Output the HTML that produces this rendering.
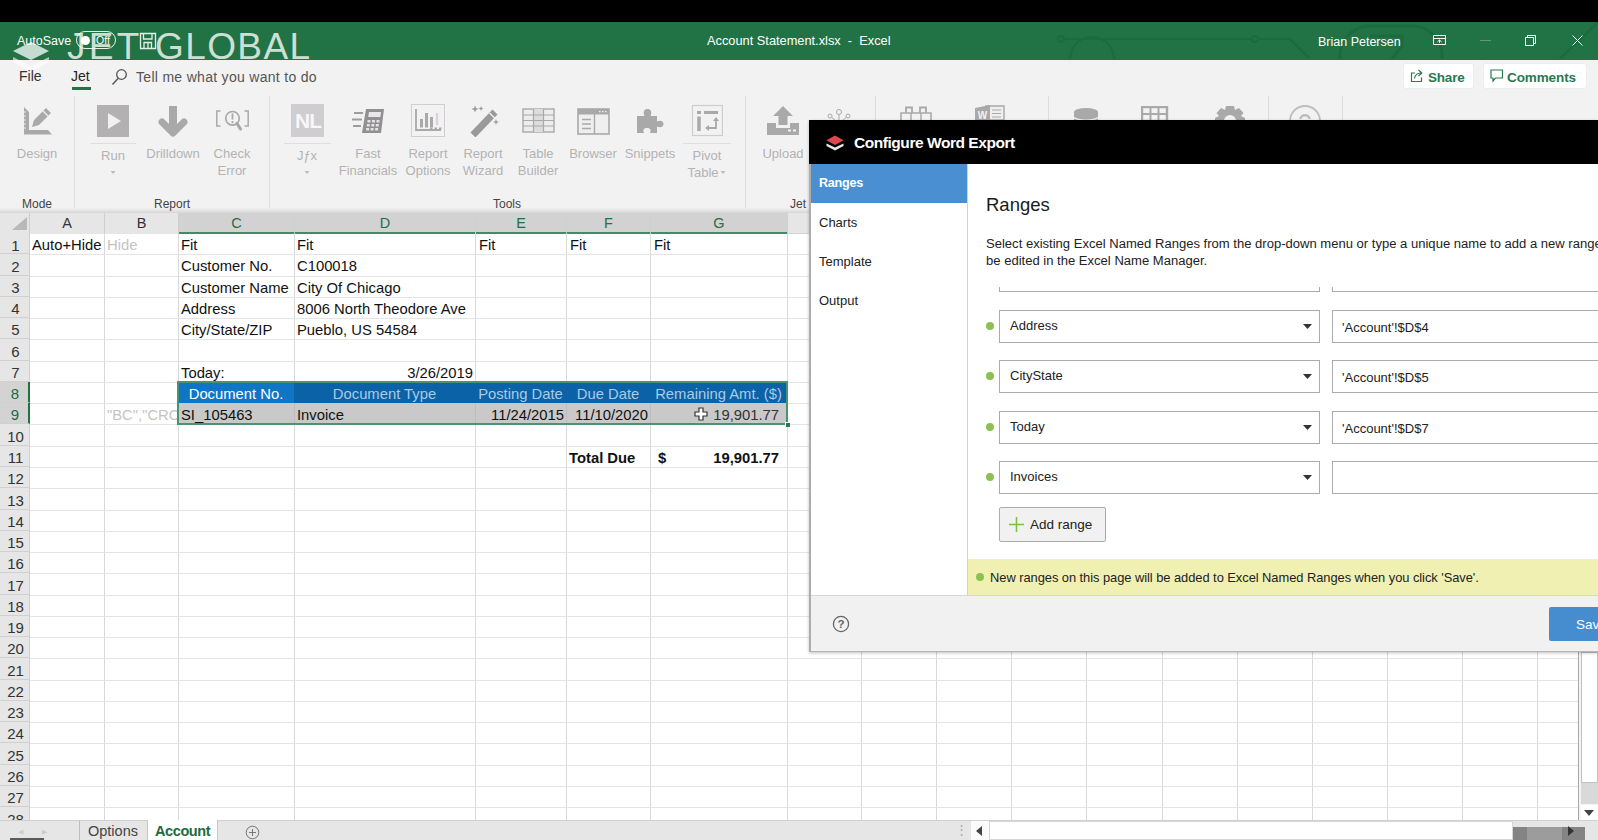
<!DOCTYPE html><html><head><meta charset="utf-8"><title>Account Statement.xlsx - Excel</title><style>
*{box-sizing:border-box;margin:0;padding:0}
html,body{width:1598px;height:840px;overflow:hidden;background:#fff}
body{position:relative;font-family:"Liberation Sans",sans-serif;font-size:13px;color:#222}
.a{position:absolute}
.t{position:absolute;white-space:nowrap;line-height:1}
#top{left:0;top:0;width:1598px;height:22px;background:#000}
#title{left:0;top:22px;width:1598px;height:38px;background:#217346;color:#fff}
#tabs{left:0;top:60px;width:1598px;height:35px;background:#f2f2f2}
#rib{left:0;top:95px;width:1598px;height:117px;background:#f2f2f2}
.rl{color:#b3b3b3;font-size:13px;margin-top:1px;text-align:center;transform:translateX(-50%)}
.gl{color:#444;font-size:12px;transform:translateX(-50%)}
.sep{width:1px;background:#dcdcdc;top:96px;height:112px}
.ch{top:213px;height:21px;background:#e6e6e6;color:#333;font-size:14.5px;text-align:center;line-height:20px;border-right:1px solid #cfcfcf}
.ch.s{background:#d2d2d2;color:#2a6b49;border-bottom:2px solid #3f8c66}
.rh{left:0;width:30px;background:#e6e6e6;color:#333;font-size:15px;text-align:center;border-bottom:1px solid #d0d0d0}
.c{position:absolute;white-space:nowrap;font-size:14.8px;color:#111;line-height:21px;height:21px}
.vl{position:absolute;width:1px;background:#d9d9d9;top:233px;height:587px}
.hl{position:absolute;height:1px;background:#e4e4e4;left:29px;width:1551px}
</style></head><body>
<div class="a" id="top"></div>
<div class="a" id="title"></div>
<div class="a" id="tabs"></div>
<div class="a" id="rib"></div>
<svg class="a" style="left:1040px;top:22px" width="558" height="37" viewBox="0 0 558 37"><g fill="none" stroke="#1c6a3f" stroke-width="2.200"><path d="M24 17H212"/><circle cx="21" cy="17" r="3"/><circle cx="215" cy="17" r="3"/><path d="M218 17H250L270 37"/><path d="M30 37A22 22 0 0 1 74 37"/><path d="M300 37A30 30 0 0 1 330 4H372A30 30 0 0 1 402 37" stroke-width="3"/><path d="M520 37L558 0"/><path d="M330 14H362V24L352 37" stroke-width="3"/></g></svg>
<div class="t" style="left:17px;top:35px;font-size:12.5px;color:#fff">AutoSave</div>
<div class="a" style="left:76px;top:31px;width:40px;height:18px;border:1px solid #e8f1ec;border-radius:9px"></div>
<div class="a" style="left:81px;top:36px;width:9px;height:9px;border-radius:50%;background:#fff"></div>
<div class="t" style="left:96px;top:35px;font-size:10.5px;color:#fff">Off</div>
<svg class="a" style="left:139px;top:32px" width="18" height="18" viewBox="0 0 18 18"><path d="M1.5 1.5H16.500V16.500H1.5Z M4.500 1.5V7H13V1.5 M5 16.500V10.500H12.500V16.500 M9 10.500V16.500" fill="none" stroke="#e6efe9" stroke-width="1.300"/></svg>
<div class="t" style="left:707px;top:35px;font-size:12.8px;color:#fff">Account Statement.xlsx &nbsp;-&nbsp; Excel</div>
<div class="t" style="left:1318px;top:36px;font-size:12.5px;color:#fff">Brian Petersen</div>
<svg class="a" style="left:1433px;top:35px" width="14" height="11"><path d="M.5.5H12.500V9.500H.5ZM.5 3.500H12.500M6.500 5V8M4.500 6.800L6.500 5L8.500 6.800" fill="none" stroke="#fff" stroke-width="1"/></svg>
<div class="a" style="left:1480px;top:40px;width:11px;height:1px;background:#5e9b7b"></div>
<svg class="a" style="left:1525px;top:35px" width="11" height="11"><path d="M.5 2.500H8.500V10.500H.5ZM2.500 2.500V.5H10.500V8.500H8.500" fill="none" stroke="#fff" stroke-width="1"/></svg>
<svg class="a" style="left:1572px;top:35px" width="11" height="11"><path d="M.5.5L10.500 10.500M10.500.5L.5 10.500" stroke="#fff" stroke-width="1"/></svg>
<div class="t" style="left:67px;top:28px;font-size:37px;color:rgba(255,255,255,.78);letter-spacing:3.300px">JET</div>
<div class="t" style="left:155px;top:28px;font-size:37px;color:rgba(255,255,255,.78);letter-spacing:1.400px">GLOBAL</div>
<svg class="a" style="left:11px;top:42px" width="40" height="36" viewBox="0 0 40 36"><path d="M2 9L20 0L38 9L20 18Z" fill="rgba(255,255,255,.75)"/><path d="M2 15L20 24L38 15V20L20 30L2 20Z" fill="rgba(255,255,255,.60)"/></svg>
<div class="t" style="left:19px;top:69px;font-size:14px;color:#333">File</div>
<div class="t" style="left:71px;top:69px;font-size:14px;color:#222">Jet</div>
<div class="a" style="left:72px;top:87px;width:19px;height:3px;background:#217346"></div>
<svg class="a" style="left:111px;top:68px" width="18" height="18" viewBox="0 0 18 18"><circle cx="10.500" cy="6.500" r="4.800" fill="none" stroke="#555" stroke-width="1.300"/><path d="M7 10.500L1.500 16.500" stroke="#555" stroke-width="1.400"/></svg>
<div class="t" style="left:136px;top:70px;font-size:14px;letter-spacing:.3px;color:#555">Tell me what you want to do</div>
<div class="a" style="left:1403px;top:63px;width:71px;height:26px;background:#fff;border:1px solid #ededed;border-radius:3px"></div>
<svg class="a" style="left:1410px;top:69px" width="15" height="14" viewBox="0 0 15 14"><path d="M5 4H1.500V12.500H11.500V8.500" fill="none" stroke="#2a7850" stroke-width="1.200"/><path d="M4.500 9.500C5 6 7.500 4 11 4M8.500 1L11.800 4L8.500 7" fill="none" stroke="#2a7850" stroke-width="1.200"/></svg>
<div class="t" style="left:1428px;top:71px;font-size:13.5px;color:#2a7850;font-weight:bold;letter-spacing:-.2px">Share</div>
<div class="a" style="left:1483px;top:63px;width:104px;height:26px;background:#fff;border:1px solid #ededed;border-radius:3px"></div>
<svg class="a" style="left:1490px;top:69px" width="14" height="14" viewBox="0 0 14 14"><path d="M1 1H12.500V9H5.500L3 12V9H1Z" fill="none" stroke="#2a7850" stroke-width="1.200"/></svg>
<div class="t" style="left:1507px;top:71px;font-size:13.5px;color:#2a7850;font-weight:bold;letter-spacing:-.1px">Comments</div>
<div class="a sep" style="left:74px"></div>
<div class="a sep" style="left:269px"></div>
<div class="a sep" style="left:745px"></div>
<div class="a sep" style="left:875px"></div>
<div class="a sep" style="left:1048px"></div>
<div class="a sep" style="left:1268px"></div>
<div class="a sep" style="left:1342px"></div>
<div class="a" style="left:0;top:208px;width:1598px;height:4px;background:linear-gradient(#f0f0f0,#dcdcdc)"></div>
<svg class="a" style="left:22px;top:105px" width="32" height="32" viewBox="0 0 32 32"><path d="M2 2L7 7V25H26L30 29.500H2Z" fill="#a9a9a9"/><path d="M2 7h2M2 11h2M2 15h2M2 19h2M2 23h2" stroke="#f2f2f2" stroke-width="1"/><path d="M10 22L12 15L24 3L29 8L17 20Z" fill="#a9a9a9"/><path d="M21 6L26 11" stroke="#f2f2f2" stroke-width="1.200"/></svg>
<div class="t rl" style="left:37px;top:146px">Design</div>
<svg class="a" style="left:97px;top:105px" width="32" height="32" viewBox="0 0 32 32"><rect x="0" y="0" width="32" height="32" fill="#b3b1b2"/><path d="M11 8L24 16L11 24Z" fill="#f3f0f3"/></svg>
<div class="a" style="left:90px;top:143px;width:46px;height:1px;background:#dedede"></div>
<div class="t rl" style="left:113px;top:148px">Run</div>
<svg class="a" style="left:110px;top:171px" width="6" height="4"><path d="M.5 0H5.500L3 3Z" fill="#bcbcbc"/></svg>
<svg class="a" style="left:157px;top:105px" width="32" height="33" viewBox="0 0 32 33"><path d="M16 1V24" stroke="#a9a9a9" stroke-width="8" fill="none"/><path d="M5 17L16 28L27 17" stroke="#a9a9a9" stroke-width="7" fill="none" stroke-linecap="round" stroke-linejoin="round"/></svg>
<div class="t rl" style="left:173px;top:146px">Drilldown</div>
<svg class="a" style="left:215px;top:108px" width="36" height="26" viewBox="0 0 36 26"><path d="M5.500 3H1.800V18H5.500M29.500 3H33.200V18H29.500" fill="none" stroke="#a9a9a9" stroke-width="1.500"/><circle cx="17.500" cy="10.300" r="6.800" fill="none" stroke="#a9a9a9" stroke-width="1.700"/><path d="M22 15.500L25.500 21" stroke="#a9a9a9" stroke-width="3.200" stroke-linecap="round"/><path d="M17.500 5.500V11.500" stroke="#a9a9a9" stroke-width="1.800"/><circle cx="17.500" cy="14.200" r="1.100" fill="#a9a9a9"/></svg>
<div class="t rl" style="left:232px;top:146px">Check</div>
<div class="t rl" style="left:232px;top:163px">Error</div>
<div class="a" style="left:291px;top:104px;width:33px;height:33px;background:#cfcdcf"></div>
<div class="t" style="left:295px;top:110px;font-size:21px;font-weight:bold;color:#f8f6f8;letter-spacing:-1px">NL</div>
<div class="a" style="left:284px;top:143px;width:47px;height:1px;background:#dedede"></div>
<div class="t rl" style="left:307px;top:148px">J&#402;x</div>
<svg class="a" style="left:304px;top:171px" width="6" height="4"><path d="M.5 0H5.500L3 3Z" fill="#bcbcbc"/></svg>
<svg class="a" style="left:351px;top:107px" width="34" height="28" viewBox="0 0 34 28"><path d="M3 6H12M1 12.500H11M2 19H10" stroke="#9d9d9d" stroke-width="1.800"/><path d="M15 2H33L30 26H11Z" fill="#909090"/><path d="M18 5H30L29.400 10H17.200Z" fill="#e9e7e9"/><g fill="#e4e2e4"><path d="M16.500 13h3v2.500h-3zM21 13h3v2.500h-3zM25.500 13h3v2.500h-3zM15.800 17h3v2.500h-3zM20.300 17h3v2.500h-3zM24.800 17h3v2.500h-3zM15.100 21h3v2.500h-3zM19.600 21h3v2.500h-3zM24.100 21h3v2.500h-3z"/></g></svg>
<div class="t rl" style="left:368px;top:146px">Fast</div>
<div class="t rl" style="left:368px;top:163px">Financials</div>
<svg class="a" style="left:411px;top:104px" width="35" height="34" viewBox="0 0 35 34"><rect x=".5" y=".5" width="33" height="32" fill="none" stroke="#cfcfcf" stroke-width="1"/><path d="M5 5V26H30" fill="none" stroke="#a9a9a9" stroke-width="1.800"/><path d="M10.500 15V23.500M15.500 9V23.500M20.500 13V23.500" stroke="#a9a9a9" stroke-width="3"/><path d="M26 9V21" stroke="#dccfe0" stroke-width="2.200"/><path d="M19 27.500h2.500M23.500 27.500h2.500M28 27.500h2.500" stroke="#a9a9a9" stroke-width="2" transform="translate(0,-3)"/></svg>
<div class="t rl" style="left:428px;top:146px">Report</div>
<div class="t rl" style="left:428px;top:163px">Options</div>
<svg class="a" style="left:468px;top:105px" width="32" height="32" viewBox="0 0 32 32"><path d="M5 30L27 7" stroke="#9a9a9a" stroke-width="7" stroke-linecap="butt"/><path d="M21.500 8L27 13.500" stroke="#f2f2f2" stroke-width="1.300"/><path d="M7 .5L8 3L10.500 4L8 5L7 7.500L6 5L3.500 4L6 3ZM13 1L13.700 2.800L15.500 3.500L13.700 4.200L13 6L12.300 4.200L10.500 3.500L12.300 2.800ZM28 14L28.800 16.200L31 17L28.800 17.800L28 20L27.200 17.800L25 17L27.200 16.200Z" fill="#9a9a9a"/></svg>
<div class="t rl" style="left:483px;top:146px">Report</div>
<div class="t rl" style="left:483px;top:163px">Wizard</div>
<svg class="a" style="left:522px;top:108px" width="33" height="26" viewBox="0 0 33 26"><rect x="1" y="1" width="31" height="23" fill="#ededed" stroke="#a9a9a9" stroke-width="1.400"/><rect x="11.500" y="1" width="10" height="23" fill="#dcdcdc"/><path d="M1 7H32M1 12.500H32M1 18H32M11.500 1V24M21.500 1V24" stroke="#a9a9a9" stroke-width="1.200"/></svg>
<div class="t rl" style="left:538px;top:146px">Table</div>
<div class="t rl" style="left:538px;top:163px">Builder</div>
<svg class="a" style="left:577px;top:108px" width="33" height="28" viewBox="0 0 33 28"><rect x="1" y="1" width="31" height="25" fill="#efefef" stroke="#a9a9a9" stroke-width="1.600"/><rect x="1" y="1" width="31" height="5.500" fill="#a9a9a9"/><path d="M17.500 6V26" stroke="#a9a9a9" stroke-width="1.400"/><path d="M5 11.500H14M5 16H14M5 20.500H14" stroke="#a9a9a9" stroke-width="1.600"/><path d="M22 3.700h1.500M25 3.700h1.500M28 3.700h1.500" stroke="#f2f2f2" stroke-width="1.200"/></svg>
<div class="t rl" style="left:593px;top:146px">Browser</div>
<svg class="a" style="left:635px;top:107px" width="30" height="28" viewBox="0 0 30 28"><path d="M2 9H9.500C7.500 4.500 9.500 2 12.500 2C15.500 2 17.500 4.500 15.500 9H22V14.500C26 12.500 28.500 14.500 28.500 17C28.500 19.500 26 21.500 22 19.500V26H15C16.500 22.500 15 21 12 21C9 21 7.500 22.500 9 26H2Z" fill="#a9a9a9"/></svg>
<div class="t rl" style="left:650px;top:146px">Snippets</div>
<svg class="a" style="left:691px;top:104px" width="32" height="34" viewBox="0 0 32 34"><rect x="1.500" y="1.500" width="30" height="30" fill="none" stroke="#cfcccf" stroke-width="1.200"/><path d="M6 8.500H10M13 8.500H27" stroke="#a9a9a9" stroke-width="3"/><path d="M8 12.500V27" stroke="#a9a9a9" stroke-width="3.500"/><path d="M17 24H25V16" fill="none" stroke="#a9a9a9" stroke-width="1.800"/><path d="M14 24L18 21V27ZM25 13L22 17H28Z" fill="#a9a9a9"/></svg>
<div class="a" style="left:683px;top:143px;width:48px;height:1px;background:#dedede"></div>
<div class="t rl" style="left:707px;top:148px">Pivot</div>
<div class="t rl" style="left:703px;top:165px">Table</div>
<svg class="a" style="left:720px;top:171px" width="6" height="4"><path d="M.5 0H5.500L3 3Z" fill="#bcbcbc"/></svg>
<svg class="a" style="left:766px;top:106px" width="34" height="30" viewBox="0 0 34 30"><path d="M17 0L27 10H21.500V19H12.500V10H7Z" fill="#a9a9a9"/><path d="M1 17H10V22H24V17H33V29H1Z" fill="#a9a9a9"/><path d="M22 24.500h3M27 24.500h3" stroke="#f2f2f2" stroke-width="2"/></svg>
<div class="t rl" style="left:783px;top:146px">Upload</div>
<div class="t gl" style="left:37px;top:198px">Mode</div>
<div class="t gl" style="left:172px;top:198px">Report</div>
<div class="t gl" style="left:507px;top:198px">Tools</div>
<div class="t gl" style="left:798px;top:198px">Jet</div>
<svg class="a" style="left:824px;top:108px" width="28" height="13" viewBox="0 0 28 13"><circle cx="15" cy="4" r="2.500" fill="none" stroke="#a9a9a9" stroke-width="1"/><circle cx="6" cy="8" r="2" fill="none" stroke="#a9a9a9" stroke-width="1"/><circle cx="24" cy="8" r="2" fill="none" stroke="#a9a9a9" stroke-width="1"/><path d="M15 6.500V14M8 9.500L13 14M22 9.500L17 14" stroke="#a9a9a9" stroke-width="1"/></svg>
<svg class="a" style="left:900px;top:106px" width="32" height="14" viewBox="0 0 32 14"><path d="M1 14V7H31V14" fill="none" stroke="#a9a9a9" stroke-width="1.600"/><path d="M6 7V1.500H12V7M20 7V1.500H26V7" fill="none" stroke="#a9a9a9" stroke-width="1.800"/><path d="M11 7V14M21 7V14" stroke="#a9a9a9" stroke-width="1.400"/></svg>
<svg class="a" style="left:974px;top:104px" width="32" height="16" viewBox="0 0 32 16"><path d="M12 2H30V16H12Z" fill="#efefef" stroke="#a9a9a9" stroke-width="1.400"/><path d="M18 6H27M18 9.500H27M18 13H27" stroke="#a9a9a9" stroke-width="1.200"/><path d="M1 4L16 1V16H1Z" fill="#a9a9a9"/><text x="8.500" y="15" font-family="Liberation Sans, sans-serif" font-size="10" font-weight="bold" fill="#f2f2f2" text-anchor="middle">W</text></svg>
<svg class="a" style="left:1072px;top:107px" width="28" height="13" viewBox="0 0 28 13"><ellipse cx="14" cy="5" rx="12" ry="4" fill="#a9a9a9"/><path d="M2 5V13H26V5" fill="#a9a9a9"/><path d="M2 10.500C6 14 22 14 26 10.500" fill="none" stroke="#f2f2f2" stroke-width="1.200"/></svg>
<svg class="a" style="left:1141px;top:106px" width="28" height="14" viewBox="0 0 28 14"><rect x="1" y="1" width="25" height="14" fill="none" stroke="#a9a9a9" stroke-width="2.400"/><path d="M9.500 1V14M17.500 1V14M1 8H26" stroke="#a9a9a9" stroke-width="2"/></svg>
<svg class="a" style="left:1213px;top:105px" width="34" height="15" viewBox="0 0 34 15"><path d="M13 1H21L22 5L26 3L30.500 8L28 11L32 13V15H2V13L6 11L3.500 8L8 3L12 5Z" fill="#a9a9a9"/><circle cx="17" cy="16" r="6" fill="#f2f2f2"/></svg>
<svg class="a" style="left:1288px;top:104px" width="34" height="16" viewBox="0 0 34 16"><circle cx="17" cy="17" r="15" fill="none" stroke="#bdbdbd" stroke-width="1.800"/><path d="M12.500 15C12.500 10 21.500 10 21.500 15" fill="none" stroke="#bdbdbd" stroke-width="2.400"/></svg>
<div class="a" style="left:0;top:212px;width:1598px;height:608px;background:#fff"></div>
<div class="a" style="left:0;top:212px;width:1598px;height:22px;background:#e6e6e6;border-top:1px solid #d8d8d8;border-bottom:1px solid #d4d4d4"></div>
<div class="a" style="left:0;top:213px;width:30px;height:21px;background:#e6e6e6;border-right:1px solid #cfcfcf"></div>
<svg class="a" style="left:11px;top:217px" width="17" height="14"><path d="M16 0V13H1Z" fill="#b9b9b9"/></svg>
<div class="a ch" style="left:30px;width:75px">A</div>
<div class="a ch" style="left:105px;width:74px">B</div>
<div class="a ch s" style="left:179px;width:116px">C</div>
<div class="a ch s" style="left:295px;width:181px">D</div>
<div class="a ch s" style="left:476px;width:91px">E</div>
<div class="a ch s" style="left:567px;width:84px">F</div>
<div class="a ch s" style="left:651px;width:137px">G</div>
<div class="vl" style="left:104px"></div>
<div class="vl" style="left:178px"></div>
<div class="vl" style="left:294px"></div>
<div class="vl" style="left:475px"></div>
<div class="vl" style="left:566px"></div>
<div class="vl" style="left:650px"></div>
<div class="vl" style="left:787px"></div>
<div class="vl" style="left:861px"></div>
<div class="vl" style="left:936px"></div>
<div class="vl" style="left:1011px"></div>
<div class="vl" style="left:1086px"></div>
<div class="vl" style="left:1162px"></div>
<div class="vl" style="left:1237px"></div>
<div class="vl" style="left:1312px"></div>
<div class="vl" style="left:1387px"></div>
<div class="vl" style="left:1462px"></div>
<div class="vl" style="left:1537px"></div>
<div class="hl" style="top:254px"></div>
<div class="hl" style="top:276px"></div>
<div class="hl" style="top:297px"></div>
<div class="hl" style="top:318px"></div>
<div class="hl" style="top:339px"></div>
<div class="hl" style="top:361px"></div>
<div class="hl" style="top:382px"></div>
<div class="hl" style="top:403px"></div>
<div class="hl" style="top:424px"></div>
<div class="hl" style="top:446px"></div>
<div class="hl" style="top:467px"></div>
<div class="hl" style="top:488px"></div>
<div class="hl" style="top:510px"></div>
<div class="hl" style="top:531px"></div>
<div class="hl" style="top:552px"></div>
<div class="hl" style="top:573px"></div>
<div class="hl" style="top:595px"></div>
<div class="hl" style="top:616px"></div>
<div class="hl" style="top:637px"></div>
<div class="hl" style="top:658px"></div>
<div class="hl" style="top:680px"></div>
<div class="hl" style="top:701px"></div>
<div class="hl" style="top:722px"></div>
<div class="hl" style="top:743px"></div>
<div class="hl" style="top:765px"></div>
<div class="hl" style="top:786px"></div>
<div class="hl" style="top:807px"></div>
<div class="a rh" style="top:234px;height:20px;line-height:24px;padding-left:2px;border-right:1px solid #cfcfcf;">1</div>
<div class="a rh" style="top:254px;height:22px;line-height:25px;padding-left:2px;border-right:1px solid #cfcfcf;">2</div>
<div class="a rh" style="top:276px;height:21px;line-height:24px;padding-left:2px;border-right:1px solid #cfcfcf;">3</div>
<div class="a rh" style="top:297px;height:21px;line-height:24px;padding-left:2px;border-right:1px solid #cfcfcf;">4</div>
<div class="a rh" style="top:318px;height:21px;line-height:24px;padding-left:2px;border-right:1px solid #cfcfcf;">5</div>
<div class="a rh" style="top:339px;height:22px;line-height:25px;padding-left:2px;border-right:1px solid #cfcfcf;">6</div>
<div class="a rh" style="top:361px;height:21px;line-height:24px;padding-left:2px;border-right:1px solid #cfcfcf;">7</div>
<div class="a rh" style="top:382px;height:21px;line-height:24px;padding-left:2px;background:#d3d3d3;color:#1e6b41;border-right:2px solid #217346;">8</div>
<div class="a rh" style="top:403px;height:21px;line-height:24px;padding-left:2px;background:#d3d3d3;color:#1e6b41;border-right:2px solid #217346;">9</div>
<div class="a rh" style="top:424px;height:22px;line-height:25px;padding-left:2px;border-right:1px solid #cfcfcf;">10</div>
<div class="a rh" style="top:446px;height:21px;line-height:24px;padding-left:2px;border-right:1px solid #cfcfcf;">11</div>
<div class="a rh" style="top:467px;height:21px;line-height:24px;padding-left:2px;border-right:1px solid #cfcfcf;">12</div>
<div class="a rh" style="top:488px;height:22px;line-height:25px;padding-left:2px;border-right:1px solid #cfcfcf;">13</div>
<div class="a rh" style="top:510px;height:21px;line-height:24px;padding-left:2px;border-right:1px solid #cfcfcf;">14</div>
<div class="a rh" style="top:531px;height:21px;line-height:24px;padding-left:2px;border-right:1px solid #cfcfcf;">15</div>
<div class="a rh" style="top:552px;height:21px;line-height:24px;padding-left:2px;border-right:1px solid #cfcfcf;">16</div>
<div class="a rh" style="top:573px;height:22px;line-height:25px;padding-left:2px;border-right:1px solid #cfcfcf;">17</div>
<div class="a rh" style="top:595px;height:21px;line-height:24px;padding-left:2px;border-right:1px solid #cfcfcf;">18</div>
<div class="a rh" style="top:616px;height:21px;line-height:24px;padding-left:2px;border-right:1px solid #cfcfcf;">19</div>
<div class="a rh" style="top:637px;height:21px;line-height:24px;padding-left:2px;border-right:1px solid #cfcfcf;">20</div>
<div class="a rh" style="top:658px;height:22px;line-height:25px;padding-left:2px;border-right:1px solid #cfcfcf;">21</div>
<div class="a rh" style="top:680px;height:21px;line-height:24px;padding-left:2px;border-right:1px solid #cfcfcf;">22</div>
<div class="a rh" style="top:701px;height:21px;line-height:24px;padding-left:2px;border-right:1px solid #cfcfcf;">23</div>
<div class="a rh" style="top:722px;height:21px;line-height:24px;padding-left:2px;border-right:1px solid #cfcfcf;">24</div>
<div class="a rh" style="top:743px;height:22px;line-height:25px;padding-left:2px;border-right:1px solid #cfcfcf;">25</div>
<div class="a rh" style="top:765px;height:21px;line-height:24px;padding-left:2px;border-right:1px solid #cfcfcf;">26</div>
<div class="a rh" style="top:786px;height:21px;line-height:24px;padding-left:2px;border-right:1px solid #cfcfcf;">27</div>
<div class="a rh" style="top:807px;height:22px;line-height:25px;padding-left:2px;border-right:1px solid #cfcfcf;">28</div>
<div class="c" style="top:235px;left:32px;">Auto+Hide</div>
<div class="c" style="top:235px;left:107px;color:#c4c4c4">Hide</div>
<div class="c" style="top:235px;left:181px;">Fit</div>
<div class="c" style="top:235px;left:297px;">Fit</div>
<div class="c" style="top:235px;left:479px;">Fit</div>
<div class="c" style="top:235px;left:570px;">Fit</div>
<div class="c" style="top:235px;left:654px;">Fit</div>
<div class="c" style="top:256px;left:181px;">Customer No.</div>
<div class="c" style="top:256px;left:297px;">C100018</div>
<div class="c" style="top:278px;left:181px;">Customer Name</div>
<div class="c" style="top:278px;left:297px;">City Of Chicago</div>
<div class="c" style="top:299px;left:181px;">Address</div>
<div class="c" style="top:299px;left:297px;">8006 North Theodore Ave</div>
<div class="c" style="top:320px;left:181px;">City/State/ZIP</div>
<div class="c" style="top:320px;left:297px;">Pueblo, US 54584</div>
<div class="c" style="top:363px;left:181px;">Today:</div>
<div class="c" style="top:363px;right:1125px;">3/26/2019</div>
<div class="a" style="left:178px;top:382px;width:609px;height:21px;background:#0b62a6"></div>
<div class="a" style="left:178px;top:382px;width:116px;height:21px;background:#0f76c6"></div>
<div class="a" style="left:178px;top:403px;width:609px;height:21px;background:#c9c9c9"></div>
<div class="a" style="left:294px;top:403px;width:1px;height:21px;background:#bdbdbd"></div>
<div class="a" style="left:475px;top:403px;width:1px;height:21px;background:#bdbdbd"></div>
<div class="a" style="left:566px;top:403px;width:1px;height:21px;background:#bdbdbd"></div>
<div class="a" style="left:650px;top:403px;width:1px;height:21px;background:#bdbdbd"></div>
<div class="c" style="top:384px;left:178px;width:116px;text-align:center;color:#fff">Document No.</div>
<div class="c" style="top:384px;left:294px;width:181px;text-align:center;color:#a9cbe6">Document Type</div>
<div class="c" style="top:384px;left:475px;width:91px;text-align:center;color:#a9cbe6">Posting Date</div>
<div class="c" style="top:384px;left:566px;width:84px;text-align:center;color:#a9cbe6">Due Date</div>
<div class="c" style="top:384px;left:650px;width:137px;text-align:center;color:#a9cbe6">Remaining Amt. ($)</div>
<div class="c" style="top:405px;left:107px;color:#c4c4c4;width:70px;overflow:hidden">"BC","CRO</div>
<div class="c" style="top:405px;left:181px;">SI_105463</div>
<div class="c" style="top:405px;left:297px;">Invoice</div>
<div class="c" style="top:405px;right:1034px;">11/24/2015</div>
<div class="c" style="top:405px;right:950px;">11/10/2020</div>
<div class="c" style="top:405px;right:819px;color:#333;">19,901.77</div>
<div class="a" style="left:177px;top:381px;width:611px;height:44px;border:2px solid #469470"></div>
<div class="a" style="left:785px;top:422px;width:5px;height:5px;background:#2c7a52;border-left:1px solid #fff;border-top:1px solid #fff"></div>
<svg class="a" style="left:694px;top:407px" width="14" height="14" viewBox="0 0 14 14"><path d="M5 1h4v4h4v4h-4v4h-4v-4h-4v-4h4z" fill="#fff" stroke="#333" stroke-width="1.2"/></svg>
<div class="c" style="top:448px;left:569px;font-weight:bold">Total Due</div>
<div class="c" style="top:448px;left:658px;font-weight:bold">$</div>
<div class="c" style="top:448px;right:819px;font-weight:bold">19,901.77</div>
<div class="a" style="left:0;top:820px;width:1598px;height:20px;background:#e6e6e6;border-top:1px solid #d0d0d0"></div>
<div class="a" style="left:10px;top:838px;width:34px;height:2px;background:#5a5a5a"></div>
<div class="t" style="left:18px;top:828px;font-size:7px;color:#cdcdcd">&#9664;</div>
<div class="t" style="left:42px;top:828px;font-size:7px;color:#cdcdcd">&#9654;</div>
<div class="a" style="left:79px;top:821px;width:1px;height:19px;background:#bdbdbd"></div>
<div class="t" style="left:88px;top:824px;font-size:14.5px;color:#444">Options</div>
<div class="a" style="left:147px;top:820px;width:71px;height:20px;background:#fff;border-left:1px solid #c6c6c6;border-right:1px solid #c6c6c6"></div>
<div class="t" style="left:155px;top:824px;font-size:14.5px;color:#1e6b41;font-weight:bold;letter-spacing:-.4px">Account</div>
<svg class="a" style="left:245px;top:825px" width="15" height="15" viewBox="0 0 15 15"><circle cx="7.5" cy="7.5" r="6.3" fill="none" stroke="#777" stroke-width="1"/><path d="M4 7.5h7M7.5 4v7" stroke="#777" stroke-width="1"/></svg>
<div class="t" style="left:955px;top:823px;font-size:13px;color:#aaa;letter-spacing:0">&#8942;</div>
<div class="a" style="left:971px;top:821px;width:18px;height:19px;background:#fbfbfb"></div>
<svg class="a" style="left:975px;top:826px" width="8" height="10"><path d="M7 0L1 5L7 10Z" fill="#444"/></svg>
<div class="a" style="left:989px;top:821px;width:524px;height:19px;background:#fff;border:1px solid #d6d6d6"></div>
<div class="a" style="left:1513px;top:827px;width:72px;height:13px;background:#848484"></div>
<div class="a" style="left:1527px;top:827px;width:35px;height:13px;background:#9c9c9c"></div>
<svg class="a" style="left:1567px;top:826px" width="8" height="10"><path d="M1 0L7 5L1 10Z" fill="#333"/></svg>
<div class="a" style="left:1578px;top:233px;width:20px;height:587px;background:#f4f4f4;border-left:1px solid #a8a8a8"></div>
<div class="a" style="left:1581px;top:652px;width:17px;height:131px;background:#fff;border:1px solid #c0c0c0"></div>
<div class="a" style="left:1581px;top:783px;width:17px;height:21px;background:#d9d9d9"></div>
<div class="a" style="left:1581px;top:805px;width:17px;height:15px;background:#fff"></div>
<svg class="a" style="left:1584px;top:810px" width="10" height="7"><path d="M0 0H10L5 6Z" fill="#444"/></svg>
<div class="a" id="dlg" style="left:809px;top:120px;width:789px;height:532px;background:#fff;border-left:2px solid #adadad;border-bottom:1px solid #b5b5b5;box-shadow:0 1px 3px rgba(0,0,0,.25);overflow:hidden">
<div class="a" style="left:0;top:0;width:791px;height:44px;background:#000"></div>
<svg class="a" style="left:14px;top:13px" width="20" height="20" viewBox="0 0 20 20"><path d="M1.5 10.5L10 14.5L18.500 10.5V13L10 17.5L1.5 13Z" fill="#e8e8e8"/><path d="M1.500 7.200L10 2.500L18.500 7.200L10 12Z" fill="#e0474c"/></svg>
<div class="t" style="left:43px;top:15px;font-size:15.5px;font-weight:bold;color:#fff;letter-spacing:-0.45px">Configure Word Export</div>
<div class="a" style="left:0;top:44px;width:157px;height:431px;background:#fff;border-right:1px solid #d2d2d2"></div>
<div class="a" style="left:0;top:44px;width:156px;height:39px;background:#4a8fd2"></div>
<div class="t" style="left:8px;top:57px;font-size:12.600px;color:#fff;font-weight:bold;letter-spacing:-.25px">Ranges</div>
<div class="t" style="left:8px;top:96px;font-size:13px;color:#222;font-weight:normal;letter-spacing:0">Charts</div>
<div class="t" style="left:8px;top:135px;font-size:13px;color:#222;font-weight:normal;letter-spacing:0">Template</div>
<div class="t" style="left:8px;top:174px;font-size:13px;color:#222;font-weight:normal;letter-spacing:0">Output</div>
<div class="t" style="left:175px;top:76px;font-size:18.500px;color:#1a1a1a">Ranges</div>
<div class="t" style="left:175px;top:115px;font-size:13.050px;color:#222;line-height:17px">Select existing Excel Named Ranges from the drop-down menu or type a unique name to add a new range. Named ranges can<br>be edited in the Excel Name Manager.</div>
<div class="a" style="left:188px;top:167px;width:321px;height:5px;border:1px solid #ababab;border-top:none"></div>
<div class="a" style="left:521px;top:167px;width:300px;height:5px;border:1px solid #ababab;border-top:none"></div>
<div class="a" style="left:175px;top:202px;width:8px;height:8px;border-radius:50%;background:#8cc152"></div>
<div class="a" style="left:188px;top:190px;width:321px;height:33px;border:1px solid #ababab;background:#fff"></div>
<div class="t" style="left:199px;top:199px;font-size:13px;color:#222">Address</div>
<svg class="a" style="left:492px;top:204px" width="9" height="5"><path d="M0 0H9L4.500 5Z" fill="#333"/></svg>
<div class="a" style="left:521px;top:190px;width:300px;height:33px;border:1px solid #ababab;background:#fff"></div>
<div class="t" style="left:531px;top:201px;font-size:13px;color:#222">'Account'!$D$4</div>
<div class="a" style="left:175px;top:252px;width:8px;height:8px;border-radius:50%;background:#8cc152"></div>
<div class="a" style="left:188px;top:240px;width:321px;height:33px;border:1px solid #ababab;background:#fff"></div>
<div class="t" style="left:199px;top:249px;font-size:13px;color:#222">CityState</div>
<svg class="a" style="left:492px;top:254px" width="9" height="5"><path d="M0 0H9L4.500 5Z" fill="#333"/></svg>
<div class="a" style="left:521px;top:240px;width:300px;height:33px;border:1px solid #ababab;background:#fff"></div>
<div class="t" style="left:531px;top:251px;font-size:13px;color:#222">'Account'!$D$5</div>
<div class="a" style="left:175px;top:303px;width:8px;height:8px;border-radius:50%;background:#8cc152"></div>
<div class="a" style="left:188px;top:291px;width:321px;height:33px;border:1px solid #ababab;background:#fff"></div>
<div class="t" style="left:199px;top:300px;font-size:13px;color:#222">Today</div>
<svg class="a" style="left:492px;top:305px" width="9" height="5"><path d="M0 0H9L4.500 5Z" fill="#333"/></svg>
<div class="a" style="left:521px;top:291px;width:300px;height:33px;border:1px solid #ababab;background:#fff"></div>
<div class="t" style="left:531px;top:302px;font-size:13px;color:#222">'Account'!$D$7</div>
<div class="a" style="left:175px;top:353px;width:8px;height:8px;border-radius:50%;background:#8cc152"></div>
<div class="a" style="left:188px;top:341px;width:321px;height:33px;border:1px solid #ababab;background:#fff"></div>
<div class="t" style="left:199px;top:350px;font-size:13px;color:#222">Invoices</div>
<svg class="a" style="left:492px;top:355px" width="9" height="5"><path d="M0 0H9L4.500 5Z" fill="#333"/></svg>
<div class="a" style="left:521px;top:341px;width:300px;height:33px;border:1px solid #ababab;background:#fff"></div>
<div class="a" style="left:188px;top:387px;width:107px;height:35px;border:1px solid #ababab;border-radius:2px;background:#f1f1f1"></div>
<svg class="a" style="left:198px;top:397px" width="15" height="15"><path d="M7.500 0V15M0 7.500H15" stroke="#7cc242" stroke-width="1.600"/></svg>
<div class="t" style="left:219px;top:398px;font-size:13.5px;color:#222">Add range</div>
<div class="a" style="left:157px;top:439px;width:640px;height:36px;background:#f0f0b2"></div>
<div class="a" style="left:165px;top:453px;width:8px;height:8px;border-radius:50%;background:#8cc152"></div>
<div class="t" style="left:179px;top:452px;font-size:12.900px;letter-spacing:-.05px;color:#222">New ranges on this page will be added to Excel Named Ranges when you click 'Save'.</div>
<div class="a" style="left:0;top:475px;width:800px;height:57px;background:#f1f1f1;border-top:1px solid #d6d6d6"></div>
<svg class="a" style="left:21px;top:495px" width="18" height="18" viewBox="0 0 18 18"><circle cx="9" cy="9" r="7.600" fill="none" stroke="#666" stroke-width="1.300"/><text x="9" y="13.200" font-family="Liberation Sans, sans-serif" font-size="11.500" font-weight="bold" fill="#666" text-anchor="middle">?</text></svg>
<div class="a" style="left:738px;top:487px;width:80px;height:34px;background:#468dd0;border-radius:2px"></div>
<div class="t" style="left:765px;top:498px;font-size:13.5px;color:#fff">Save</div>
</div>
<div class="a" style="left:809px;top:120px;width:3px;height:44px;background:#000"></div>
</body></html>
